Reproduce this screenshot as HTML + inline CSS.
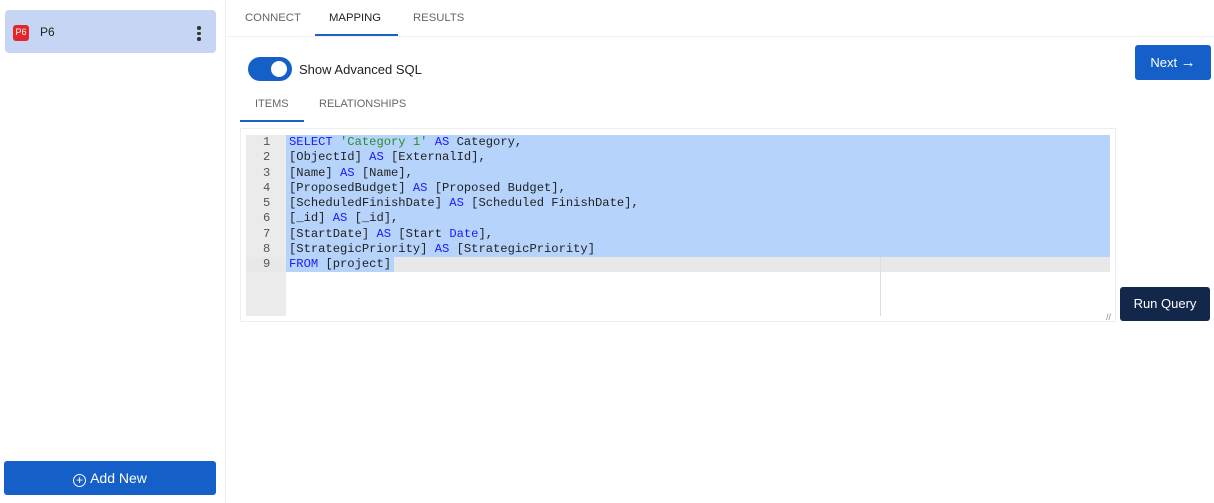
<!DOCTYPE html>
<html><head><style>
*{margin:0;padding:0;box-sizing:border-box}
body{width:1214px;height:503px;background:#fff;font-family:"Liberation Sans",sans-serif;position:relative;overflow:hidden;color:#222}
.abs{position:absolute}
.side{left:0;top:0;width:226px;height:503px;border-right:1px solid #eceef2}
.item{left:5px;top:10px;width:211px;height:43px;background:#c5d5f3;border-radius:4px}
.logo{left:13px;top:25px;width:16px;height:16px;background:#e2262b;border-radius:3px;color:#fff;font-size:9px;text-align:center;line-height:14px}
.add{left:4px;top:461px;width:212px;height:34px;background:#1560c8;border-radius:3px;color:#fff;font-size:14px;text-align:center;line-height:34px}
.tab{font-size:11.3px;color:#666}
.code{font-family:"Liberation Mono",monospace;font-size:12.15px;line-height:15.3px;white-space:pre;color:#222}
.k{color:#1a1aff}.s{color:#2e8b2e}
</style></head><body>
<div class="abs side"></div>
<div class="abs item"></div>
<div class="abs logo">P6</div>
<div class="abs" style="left:40px;top:25px;font-size:12px">P6</div>
<div class="abs" style="left:197px;top:26px;width:4px;height:16px">
<div style="width:3.5px;height:3.5px;background:#333;border-radius:50%;margin-bottom:2px"></div><div style="width:3.5px;height:3.5px;background:#333;border-radius:50%;margin-bottom:2px"></div><div style="width:3.5px;height:3.5px;background:#333;border-radius:50%"></div></div>
<div class="abs add"><span style="display:inline-block;width:13px;height:13px;border:1px solid #fff;border-radius:50%;font-size:12px;line-height:10px;vertical-align:-1px;margin-right:4px">+</span>Add New</div>

<div class="abs tab" style="left:245px;top:12px">CONNECT</div>
<div class="abs tab" style="left:329px;top:12px;color:#222">MAPPING</div>
<div class="abs tab" style="left:413px;top:12px">RESULTS</div>
<div class="abs" style="left:315px;top:34px;width:83px;height:2px;background:#1a62c6"></div>
<div class="abs" style="left:227px;top:36px;width:987px;height:1px;background:#eef0f3"></div>

<div class="abs" style="left:248px;top:57px;width:44px;height:24px;background:#1560c8;border-radius:12px"></div>
<div class="abs" style="left:271px;top:61px;width:16px;height:16px;background:#fff;border-radius:50%"></div>
<div class="abs" style="left:299px;top:62px;font-size:13px">Show Advanced SQL</div>

<div class="abs tab" style="left:255px;top:98px;font-size:11px">ITEMS</div>
<div class="abs tab" style="left:319px;top:98px;font-size:11px">RELATIONSHIPS</div>
<div class="abs" style="left:240px;top:120px;width:64px;height:2px;background:#1a62c6"></div>

<div class="abs" style="left:1135px;top:45px;width:76px;height:35px;background:#1560c8;border-radius:3px;color:#fff;font-size:13px;line-height:35px;text-align:center">Next <b style="font-size:15px">&#8594;</b></div>
<div class="abs" style="left:1120px;top:287px;width:90px;height:34px;background:#13274a;border-radius:3px;color:#fff;font-size:13px;line-height:34px;text-align:center">Run Query</div>

<div class="abs" style="left:240px;top:128px;width:876px;height:194px;border:1px solid #eceef2"></div>
<div class="abs" style="left:246px;top:135px;width:40px;height:181px;background:#ebebeb"></div>
<div class="abs" style="left:286px;top:135px;width:824px;height:122px;background:#b5d3fb"></div>
<div class="abs" style="left:246px;top:257px;width:864px;height:15px;background:#e8e8e8"></div>
<div class="abs" style="left:286px;top:257px;width:108px;height:15px;background:#b5d3fb"></div>
<div class="abs" style="left:880px;top:257px;width:1px;height:59px;background:#ddd"></div>
<div class="abs code" style="left:263px;top:135px;color:#555">1
2
3
4
5
6
7
8
9</div>
<div class="abs code" style="left:289px;top:135px"><span class="k">SELECT</span> <span class="s">'Category 1'</span> <span class="k">AS</span> Category,
[ObjectId] <span class="k">AS</span> [ExternalId],
[Name] <span class="k">AS</span> [Name],
[ProposedBudget] <span class="k">AS</span> [Proposed Budget],
[ScheduledFinishDate] <span class="k">AS</span> [Scheduled FinishDate],
[_id] <span class="k">AS</span> [_id],
[StartDate] <span class="k">AS</span> [Start <span class="k">Date</span>],
[StrategicPriority] <span class="k">AS</span> [StrategicPriority]
<span class="k">FROM</span> [project]</div>
<div class="abs" style="left:1106px;top:312px;font-size:9px;color:#888">//</div>
</body></html>
